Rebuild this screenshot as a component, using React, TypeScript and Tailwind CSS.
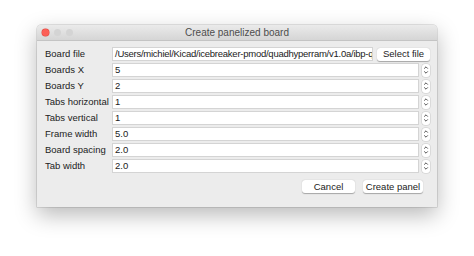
import React from 'react';

const fields = [
  { label: 'Boards X', value: '5' },
  { label: 'Boards Y', value: '2' },
  { label: 'Tabs horizontal', value: '1' },
  { label: 'Tabs vertical', value: '1' },
  { label: 'Frame width', value: '5.0' },
  { label: 'Board spacing', value: '2.0' },
  { label: 'Tab width', value: '2.0' },
];

function Spinner() {
  return (
    <div className="w-[8px] h-[13px] rounded-[3px] bg-white shadow-[0_0_0_0.5px_#c8c8c8] flex items-center justify-center">
      <svg width="6" height="10" viewBox="0 0 6 10" fill="none" stroke="#555" strokeWidth="1">
        <path d="M1.2 3.6 L3 1.8 L4.8 3.6" />
        <path d="M1.2 6.4 L3 8.2 L4.8 6.4" />
      </svg>
    </div>
  );
}

function Field({ value, tight }: { value: string; tight?: boolean }) {
  return (
    <div
      className={`flex-1 min-w-0 h-[14px] bg-white border border-[#d4d4d4] flex items-center px-[2px] overflow-hidden whitespace-nowrap text-[#222] ${
        tight ? 'tracking-[-0.25px]' : ''
      }`}
    >
      {value}
    </div>
  );
}

function MacButton({ children, w }: { children: React.ReactNode; w: string }) {
  return (
    <div
      className={`${w} h-[13px] shrink-0 bg-white rounded-[3px] shadow-[0_0.5px_1px_rgba(0,0,0,0.3)] flex items-center justify-center text-[#222] whitespace-nowrap`}
    >
      {children}
    </div>
  );
}

export default function App() {
  return (
    <div
      className="w-[474px] h-[256px] bg-white pt-[25px] pl-[37px] text-[9.5px] leading-none"
      style={{ fontFamily: '"Liberation Sans", Arial, sans-serif' }}
    >
      <div className="w-[400px] h-[182px] bg-[#ececec] rounded-t-[4px] shadow-[0_8px_22px_rgba(0,0,0,0.28),0_0_0_0.5px_rgba(0,0,0,0.2)] flex flex-col">
        {/* Title bar */}
        <div className="h-[16px] rounded-t-[4px] bg-gradient-to-b from-[#ebebeb] to-[#d5d5d5] border-b border-[#c4c4c4] flex items-center relative">
          <div className="flex items-center gap-[5px] pl-[5px]">
            <span className="w-[7px] h-[7px] rounded-full bg-[#fc5f57] shadow-[0_0_0_0.5px_#de4a42]" />
            <span className="w-[7px] h-[7px] rounded-full bg-[#d4d4d4]" />
            <span className="w-[7px] h-[7px] rounded-full bg-[#d4d4d4]" />
          </div>
          <div className="absolute inset-0 flex items-center justify-center text-[#4d4d4d] text-[10px]">
            Create panelized board
          </div>
        </div>

        {/* Form */}
        <div className="flex flex-col pl-[8px] pr-[7px] pt-[6px] gap-[2px]">
          <div className="flex items-center h-[14px]">
            <span className="w-[67px] shrink-0 text-[#222] whitespace-nowrap">Board file</span>
            <Field tight value="/Users/michiel/Kicad/icebreaker-pmod/quadhyperram/v1.0a/ibp-quadhyperram.kicad_pcb" />
            <div className="ml-[4px]">
              <MacButton w="w-[53px]">Select file</MacButton>
            </div>
          </div>
          {fields.map((f) => (
            <div key={f.label} className="flex items-center h-[14px]">
              <span className="w-[67px] shrink-0 text-[#222] whitespace-nowrap">{f.label}</span>
              <Field value={f.value} />
              <div className="ml-[3px]">
                <Spinner />
              </div>
            </div>
          ))}
        </div>

        <div className="flex justify-end gap-[8px] pr-[14px] mt-[7px]">
          <MacButton w="w-[53px]">Cancel</MacButton>
          <MacButton w="w-[60px]">Create panel</MacButton>
        </div>
      </div>
    </div>
  );
}
